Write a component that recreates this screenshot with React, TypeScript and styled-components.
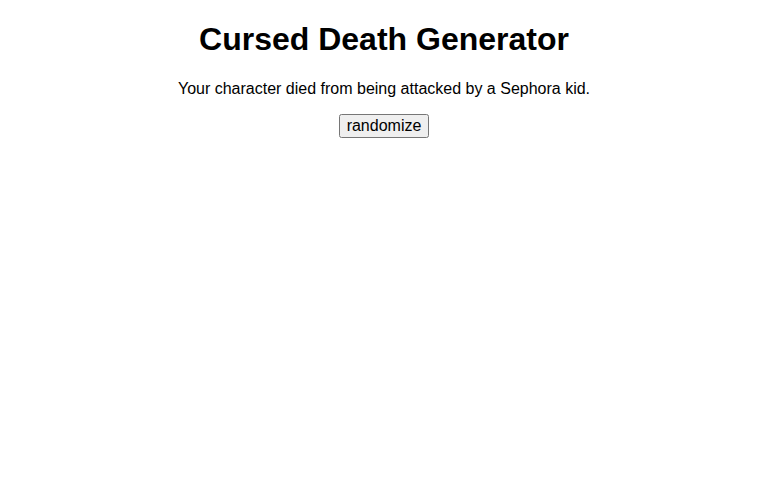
import { ReactElement, useState } from 'react'
import styled, { createGlobalStyle } from 'styled-components'

const GlobalStyle = createGlobalStyle`
  body {
    margin: 0 8px;
    font-family: "Liberation Sans", Arial, sans-serif;
    color: #000;
    background: #fff;
  }
`

const Page = styled.main`
  text-align: center;
`

const Title = styled.h1`
  font-size: 32px;
  font-weight: 700;
  margin: 21.44px 0;
`

const Result = styled.p`
  font-size: 16px;
  margin: 16px 0;
`

const RandomizeButton = styled.button`
  font-family: "Liberation Sans", Arial, sans-serif;
  font-size: 16px;
  padding: 1px 6px;
`

const deaths = [
  'being attacked by a Sephora kid',
  'stepping on a LEGO brick at 3am',
  'reading the terms and conditions',
  'a goose with a grudge',
]

export default function App(): ReactElement {
  const [index, setIndex] = useState(0)

  const randomize = () => {
    setIndex(Math.floor(Math.random() * deaths.length))
  }

  return (
    <Page>
      <GlobalStyle />
      <Title>Cursed Death Generator</Title>
      <Result>Your character died from {deaths[index]}.</Result>
      <RandomizeButton onClick={randomize}>randomize</RandomizeButton>
    </Page>
  )
}
